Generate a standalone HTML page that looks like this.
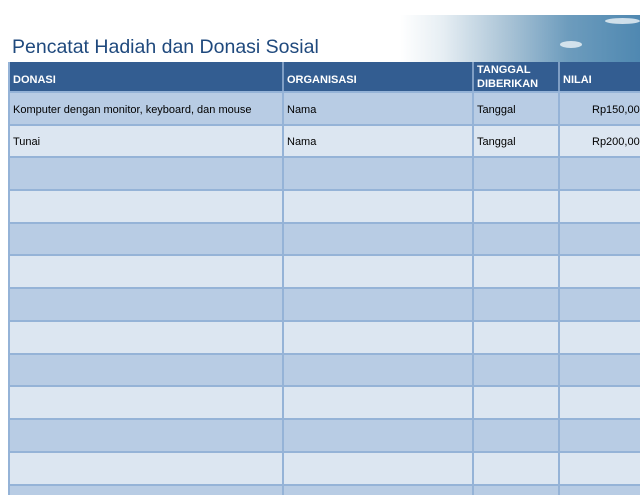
<!DOCTYPE html>
<html><head><meta charset="utf-8"><style>
*{margin:0;padding:0;box-sizing:border-box}
html,body{width:640px;height:495px;overflow:hidden}
body{background:#fff;position:relative;font-family:"Liberation Sans",sans-serif}
.sky{position:absolute;left:400px;top:15px;width:240px;height:47px;background:linear-gradient(90deg,#fff 0%,#e6eef3 18%,#a9c3d6 45%,#6d9cbd 70%,#4f88b1 100%)}
.cl{position:absolute;background:#eef4f8;border-radius:50%;opacity:.8}
.title{position:absolute;left:12px;top:36px;font-size:19.5px;color:#1f497d}
.row{position:absolute;left:8px;width:640px;border-bottom:2px solid #95b3d7;border-left:2px solid #95b3d7}
.c{position:absolute;top:0;bottom:0;border-right:2px solid #95b3d7;font-size:11px;color:#000}
.h .c{border-right:2px solid #7f9ec4;color:#fff;font-weight:bold;font-size:11px}
.t{position:absolute;left:3px;bottom:8px;white-space:nowrap}
.h .t{bottom:5px}
.a{left:0;width:274px}.b{left:274px;width:190px}.d{left:464px;width:86px}.e{left:550px;width:90px;border:none!important}
.e .t{left:32px}
.k{background:#b8cce4}.l{background:#dce6f1}
</style></head><body>
<div class="sky"><div class="cl" style="left:205px;top:3px;width:35px;height:6px"></div><div class="cl" style="left:160px;top:26px;width:22px;height:7px"></div></div>
<div class="title">Pencatat Hadiah dan Donasi Sosial</div>
<div class="row h" style="top:62px;height:31px;background:#335d91">
<div class="c a"><span class="t">DONASI</span></div>
<div class="c b"><span class="t">ORGANISASI</span></div>
<div class="c d"><span class="t" style="top:1px;bottom:auto;line-height:14px">TANGGAL<br>DIBERIKAN</span></div>
<div class="c e"><span class="t" style="left:3px">NILAI</span></div>
</div>
<div class="row k" style="top:93px;height:33px"><div class="c a"><span class="t">Komputer dengan monitor, keyboard, dan mouse</span></div><div class="c b"><span class="t">Nama</span></div><div class="c d"><span class="t">Tanggal</span></div><div class="c e"><span class="t">Rp150,00</span></div></div>
<div class="row l" style="top:126px;height:32px"><div class="c a"><span class="t">Tunai</span></div><div class="c b"><span class="t">Nama</span></div><div class="c d"><span class="t">Tanggal</span></div><div class="c e"><span class="t">Rp200,00</span></div></div>
<div class="row k" style="top:158px;height:33px"><div class="c a"></div><div class="c b"></div><div class="c d"></div></div>
<div class="row l" style="top:191px;height:33px"><div class="c a"></div><div class="c b"></div><div class="c d"></div></div>
<div class="row k" style="top:224px;height:32px"><div class="c a"></div><div class="c b"></div><div class="c d"></div></div>
<div class="row l" style="top:256px;height:33px"><div class="c a"></div><div class="c b"></div><div class="c d"></div></div>
<div class="row k" style="top:289px;height:33px"><div class="c a"></div><div class="c b"></div><div class="c d"></div></div>
<div class="row l" style="top:322px;height:33px"><div class="c a"></div><div class="c b"></div><div class="c d"></div></div>
<div class="row k" style="top:355px;height:32px"><div class="c a"></div><div class="c b"></div><div class="c d"></div></div>
<div class="row l" style="top:387px;height:33px"><div class="c a"></div><div class="c b"></div><div class="c d"></div></div>
<div class="row k" style="top:420px;height:33px"><div class="c a"></div><div class="c b"></div><div class="c d"></div></div>
<div class="row l" style="top:453px;height:33px"><div class="c a"></div><div class="c b"></div><div class="c d"></div></div>
<div class="row k" style="top:486px;height:33px"><div class="c a"></div><div class="c b"></div><div class="c d"></div></div>
</body></html>
